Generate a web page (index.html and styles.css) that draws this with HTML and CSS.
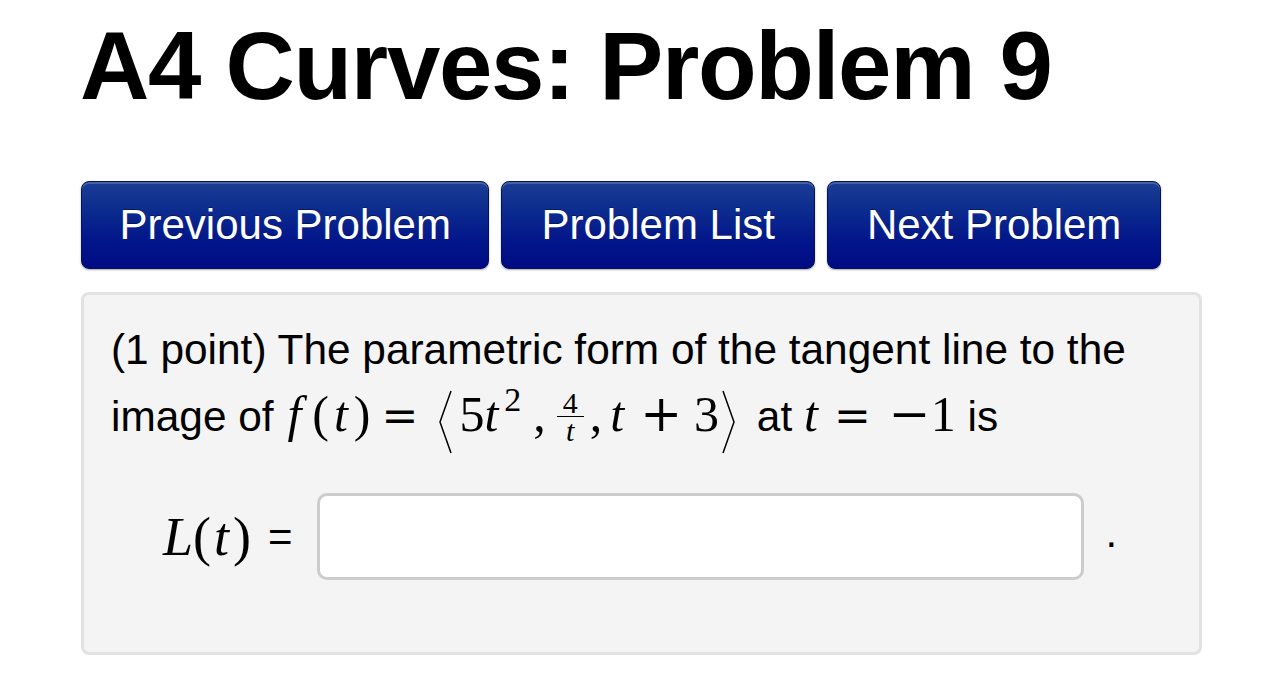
FILE: index.html
```html
<!DOCTYPE html>
<html lang="en">
<head>
<meta charset="utf-8">
<title>A4 Curves: Problem 9</title>
<link rel="stylesheet" href="styles.css">
</head>
<body>
<main class="page">
  <h1 class="title">A4 Curves: Problem 9</h1>
  <nav class="nav">
    <a class="btn btn-prev" href="#">Previous Problem</a>
    <a class="btn" href="#">Problem List</a>
    <a class="btn" href="#">Next Problem</a>
  </nav>
  <section class="problem">
    <p class="statement">(1 point) The parametric form of the tangent line to the image of <span class="math"><span class="mi f">f</span><span class="mo">(</span><span class="mi in">t</span><span class="mo">)</span><span class="rel">=</span><svg class="angle left" viewBox="0 0 20 64" aria-hidden="true"><path d="M16 1 L5 32 L16 63" fill="none" stroke="#000" stroke-width="1.5"/></svg><span class="mn">5</span><span class="mi">t</span><sup class="sup">2</sup><span class="punct p1">,</span><span class="frac"><span class="num">4</span><span class="den mi">t</span></span><span class="punct p2">,</span><span class="mi">t</span><span class="bin">+</span><span class="mn">3</span><svg class="angle right" viewBox="0 0 20 64" aria-hidden="true"><path d="M4 1 L15 32 L4 63" fill="none" stroke="#000" stroke-width="1.5"/></svg></span> at <span class="math"><span class="mi">t</span><span class="rel rel2">=</span><span class="bin minus">&minus;</span><span class="mn">1</span></span> is</p>
    <div class="answer">
      <span class="math answer-label"><span class="mi">L</span><span class="lp">(</span><span class="mi lt">t</span><span class="lp">)</span></span>
      <span class="eq">=</span>
      <input class="answer-input" type="text" aria-label="L(t)">
      <span class="period">.</span>
    </div>
  </section>
</main>
</body>
</html>
```

FILE: styles.css
```css
html, body {
  margin: 0;
  padding: 0;
  background: #ffffff;
}

body {
  font-family: "Liberation Sans", Arial, Helvetica, sans-serif;
  color: #000;
}

.page {
  padding: 18px 0 0 81px;
  width: 1121px;
}

.title {
  margin: 0 0 0 -1px;
  font-size: 96px;
  line-height: 96px;
  font-weight: 700;
  letter-spacing: -1.3px;
}

.nav {
  display: flex;
  gap: 12px;
  margin-top: 67px;
}

.btn {
  box-sizing: border-box;
  display: inline-flex;
  align-items: center;
  height: 88px;
  padding: 0 39px;
  font-size: 42px;
  line-height: 1;
  color: #fff;
  text-decoration: none;
  border: 1px solid #04125c;
  border-radius: 8px;
  background: linear-gradient(#1b3d93 0%, #0b2a8e 35%, #02158a 70%, #000b84 100%);
  box-shadow: inset 0 2px 0 rgba(255,255,255,0.18), 0 1px 2px rgba(0,0,0,0.35);
  text-shadow: 0 -1px 0 rgba(0,0,0,0.35);
}

.btn-prev {
  padding: 0 37.5px;
}

.problem {
  box-sizing: border-box;
  margin-top: 23px;
  height: 363px;
  background: #f4f4f4;
  border: 3px solid #e2e2e2;
  border-radius: 8px;
  padding: 23px 27px 0 27px;
}

.statement {
  margin: 0;
  font-size: 42.4px;
  line-height: 64px;
}

.math {
  font-family: "Liberation Serif", "Times New Roman", serif;
  font-size: 50px;
  white-space: nowrap;
}

.mi {
  font-style: italic;
}

.mo {
  margin: 0 1px;
}

.f {
  margin-left: 2px;
  margin-right: 10px;
}

.in {
  margin: 0 5px 0 4px;
}

.rel,
.bin {
  font-family: "DejaVu Serif", "Liberation Serif", serif;
}

.rel {
  font-size: 44px;
  margin: 0 13px 0 10px;
}

.rel.rel2 {
  margin: 0 10px 0 16px;
}

.bin {
  font-size: 50px;
  margin: 0 12px 0 16px;
}

.bin.minus {
  margin: 0 0 0 8px;
}

.p1 {
  margin: 0 11px 0 12px;
}

.p2 {
  margin: 0 8px 0 6px;
}

.sup {
  font-size: 34px;
  vertical-align: 20px;
  line-height: 0;
  margin-left: 6px;
}

.angle {
  width: 20px;
  height: 64px;
  vertical-align: -23px;
}

.angle.left {
  margin: 0 4px 0 4px;
}

.angle.right {
  margin: 0 6px 0 0;
}

.frac {
  display: inline-flex;
  flex-direction: column;
  align-items: center;
  vertical-align: 18px;
  font-size: 30px;
  line-height: 22px;
}

.num {
  display: block;
  font-style: normal;
  padding: 0 6px 2px;
  border-bottom: 1.5px solid #000;
}

.den {
  display: block;
  padding-top: 3px;
}

.answer {
  display: flex;
  align-items: center;
  margin-top: 39px;
  padding-left: 52px;
}

.answer-label {
  font-size: 54px;
}

.lt {
  margin: 0 4px 0 3px;
}

.eq {
  font-size: 42px;
  margin: 0 24px 0 17px;
}

.answer-input {
  box-sizing: border-box;
  width: 767px;
  height: 87px;
  border: 3px solid #cccccc;
  border-radius: 10px;
  background: #fff;
  padding: 0 12px;
  font-size: 36px;
  outline: none;
}

.period {
  font-size: 42px;
  margin-left: 22px;
  position: relative;
  top: -4px;
}
```
